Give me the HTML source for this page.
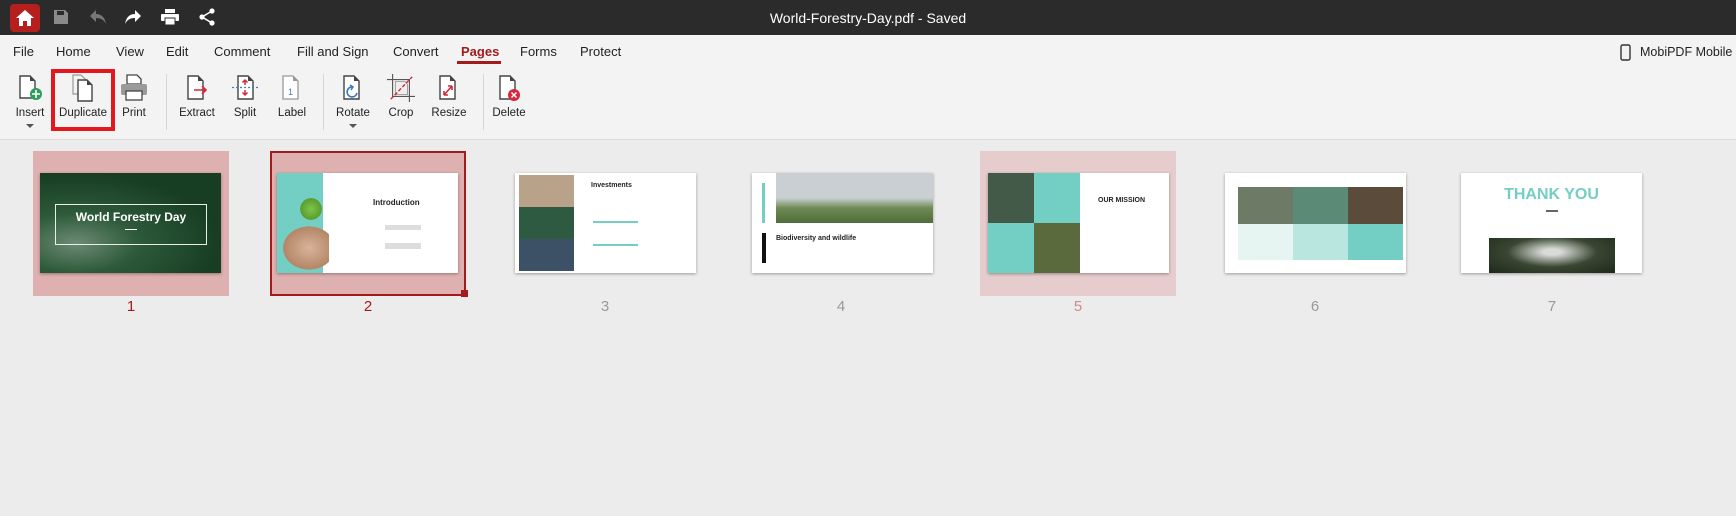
<!DOCTYPE html>
<html><head><meta charset="utf-8"><style>
*{margin:0;padding:0;box-sizing:border-box}
body{width:1736px;height:516px;background:#ececec;font-family:"Liberation Sans",sans-serif;position:relative;overflow:hidden;color:#222}
.a{position:absolute}
#tb{left:0;top:0;width:1736px;height:35px;background:#2b2b2b}
#menu{left:0;top:35px;width:1736px;height:33px;background:#f3f3f3}
#rib{left:0;top:68px;width:1736px;height:72px;background:#f3f3f3;border-bottom:1px solid #dcdcdc}
.m{position:absolute;top:44px;font-size:13px;color:#222;white-space:nowrap}
.btn{position:absolute;top:74px;width:60px;text-align:center;font-size:11.5px;color:#222;white-space:nowrap}
.btn svg{display:block;margin:0 auto 5px auto}
.sep{position:absolute;top:74px;width:1px;height:56px;background:#d6d6d6}
.slide{position:absolute;top:173px;width:181px;height:100px;background:#fff;box-shadow:0 1px 3px rgba(0,0,0,.35);overflow:hidden}
.num{position:absolute;top:298px;width:40px;text-align:center;font-size:15px;color:#999}
.ln{position:absolute;height:2px;background:#ccc}
</style></head><body>
<div class="a" id="tb"></div>
<div class="a" style="left:10px;top:4px;width:30px;height:28px;background:#b5201e;border-radius:4px"></div>
<svg class="a" style="left:15px;top:8px" width="20" height="20" viewBox="0 0 20 20"><path d="M10 2 L19 10 H16 V18 H12 V13 H8 V18 H4 V10 H1Z" fill="#fff"/></svg>
<svg class="a" style="left:53px;top:9px" width="16" height="16"><path d="M1 1H12L15 4V15H1Z" fill="#8a8a8a"/><rect x="4" y="2" width="7" height="4" fill="#2b2b2b"/></svg>
<svg class="a" style="left:89px;top:9px" width="18" height="16"><path d="M7 1L1 7L7 13V9C12 9 15 11 17 15C16 9 13 5 7 5Z" fill="#777"/></svg>
<svg class="a" style="left:124px;top:9px" width="18" height="16"><path d="M11 1L17 7L11 13V9C6 9 3 11 1 15C2 9 5 5 11 5Z" fill="#fff"/></svg>
<svg class="a" style="left:161px;top:9px" width="18" height="16"><rect x="4" y="0" width="10" height="4" fill="#fff"/><rect x="0" y="5" width="18" height="7" rx="1" fill="#fff"/><rect x="4" y="9" width="10" height="7" fill="#fff" stroke="#2b2b2b"/></svg>
<svg class="a" style="left:198px;top:8px" width="18" height="18"><circle cx="14" cy="3" r="2.6" fill="#fff"/><circle cx="4" cy="9" r="2.6" fill="#fff"/><circle cx="14" cy="15" r="2.6" fill="#fff"/><path d="M14 3L4 9L14 15" stroke="#fff" stroke-width="1.6" fill="none"/></svg>
<div class="a" style="left:0;top:10px;width:1736px;text-align:center;color:#fff;font-size:14px">World-Forestry-Day.pdf - Saved</div>

<div class="a" id="menu"></div>
<div class="m" style="left:13px">File</div>
<div class="m" style="left:56px">Home</div>
<div class="m" style="left:116px">View</div>
<div class="m" style="left:166px">Edit</div>
<div class="m" style="left:214px">Comment</div>
<div class="m" style="left:297px">Fill and Sign</div>
<div class="m" style="left:393px">Convert</div>
<div class="m" style="left:461px;color:#a31b1b;font-weight:bold">Pages</div>
<div class="a" style="left:457px;top:61px;width:44px;height:3px;background:#a31b1b"></div>
<div class="m" style="left:520px">Forms</div>
<div class="m" style="left:580px">Protect</div>
<svg class="a" style="left:1620px;top:44px" width="11" height="17"><rect x="1" y="1" width="9" height="15" rx="1.5" fill="none" stroke="#333" stroke-width="1.4"/></svg>
<div class="m" style="left:1640px;top:45px;font-size:12.5px">MobiPDF Mobile</div>

<div class="a" id="rib"></div>
<div class="btn" style="left:0">
<svg width="26" height="28"><path d="M3 2H13L18 7V24H3Z" fill="#fff" stroke="#444" stroke-width="1.4"/><path d="M13 2V7H18" fill="#444"/><circle cx="19" cy="20" r="6" fill="#2e9e5b"/><path d="M19 16V24M15 20H23" stroke="#fff" stroke-width="1.6"/></svg>Insert<div style="margin:5px auto 0;width:0;height:0;border-left:4px solid transparent;border-right:4px solid transparent;border-top:4px solid #555"></div></div>
<div class="btn" style="left:53px">
<svg width="26" height="28"><path d="M3 1H11L15 5V20H3Z" fill="#f3f3f3" stroke="#999" stroke-width="1.2"/><path d="M8 6H17L22 11V27H8Z" fill="#fff" stroke="#444" stroke-width="1.4"/><path d="M17 6V11H22" fill="#444"/></svg>Duplicate</div>
<div class="a" style="left:51px;top:69px;width:64px;height:62px;border:4px solid #e3171c"></div>
<div class="btn" style="left:104px">
<svg width="30" height="28"><path d="M8 1H18L22 5V10H8Z" fill="#fff" stroke="#444" stroke-width="1.3"/><rect x="2" y="10" width="26" height="11" rx="2" fill="#9a9a9a"/><rect x="7" y="17" width="16" height="9" fill="#fff" stroke="#444" stroke-width="1.3"/></svg>Print</div>
<div class="sep" style="left:166px"></div>
<div class="btn" style="left:167px">
<svg width="26" height="28"><path d="M4 2H14L19 7V25H4Z" fill="#fff" stroke="#444" stroke-width="1.4"/><path d="M14 2V7H19" fill="#444"/><path d="M10 16H22M18 12L22 16L18 20" stroke="#d7263d" stroke-width="1.6" fill="none"/></svg>Extract</div>
<div class="btn" style="left:215px">
<svg width="30" height="28"><path d="M8 2H18L23 7V25H8Z" fill="#fff" stroke="#444" stroke-width="1.4"/><path d="M18 2V7H23" fill="#444"/><path d="M2 13.5H28" stroke="#4a7bb5" stroke-width="1.2" stroke-dasharray="2 2"/><path d="M15 6V11M12.5 8.5L15 6L17.5 8.5M15 16V21M12.5 18.5L15 21L17.5 18.5" stroke="#d7263d" stroke-width="1.5" fill="none"/></svg>Split</div>
<div class="btn" style="left:262px">
<svg width="26" height="28"><path d="M4 2H14L19 7V25H4Z" fill="#fff" stroke="#999" stroke-width="1.3"/><path d="M14 2V7H19" fill="#999"/><text x="9" y="21" font-size="9" fill="#4a7bb5" font-family="Liberation Sans">1</text></svg>Label</div>
<div class="sep" style="left:323px"></div>
<div class="btn" style="left:323px">
<svg width="26" height="28"><path d="M4 2H14L19 7V25H4Z" fill="#fff" stroke="#444" stroke-width="1.4"/><path d="M14 2V7H19" fill="#444"/><path d="M17 19A5 5 0 1 1 13 13" stroke="#2f79c0" stroke-width="1.6" fill="none"/><path d="M10 11L13 13L11 16" stroke="#2f79c0" stroke-width="1.5" fill="none"/></svg>Rotate<div style="margin:5px auto 0;width:0;height:0;border-left:4px solid transparent;border-right:4px solid transparent;border-top:4px solid #555"></div></div>
<div class="btn" style="left:371px">
<svg width="30" height="28" viewBox="0 0 30 30"><path d="M6 0V24H30M0 6H24V30" stroke="#555" stroke-width="1.2" fill="none"/><path d="M9 8H19L22 11V22H9Z" fill="#eee" stroke="#999"/><path d="M4 27L27 3" stroke="#d7263d" stroke-width="1.5" stroke-dasharray="4 2"/></svg>Crop</div>
<div class="btn" style="left:419px">
<svg width="26" height="28"><path d="M4 2H14L19 7V25H4Z" fill="#fff" stroke="#444" stroke-width="1.4"/><path d="M14 2V7H19" fill="#444"/><path d="M8 21L16 12M8 21V17M8 21H12M16 12H12M16 12V16" stroke="#d7263d" stroke-width="1.6" fill="none"/></svg>Resize</div>
<div class="sep" style="left:483px"></div>
<div class="btn" style="left:479px">
<svg width="26" height="28"><path d="M4 2H14L19 7V25H4Z" fill="#fff" stroke="#444" stroke-width="1.4"/><path d="M14 2V7H19" fill="#444"/><circle cx="18" cy="21" r="6" fill="#d7263d"/><path d="M15.5 18.5L20.5 23.5M20.5 18.5L15.5 23.5" stroke="#fff" stroke-width="1.5"/></svg>Delete</div>

<!-- pages -->
<div class="a" style="left:33px;top:151px;width:196px;height:145px;background:#dfb0b0"></div>
<div class="a" style="left:270px;top:151px;width:196px;height:145px;background:#dfb0b0;border:2px solid #a31b1b"></div>
<div class="a" style="left:461px;top:290px;width:7px;height:7px;background:#a31b1b"></div>
<div class="a" style="left:980px;top:151px;width:196px;height:145px;background:#e6cccc"></div>

<div class="slide" style="left:40px;background:radial-gradient(ellipse at 20% 70%,#6d8a74 0%,#2d5a3a 30%,#173d23 70%)">
<div class="a" style="left:15px;top:31px;width:152px;height:41px;border:1px solid #e8efe8"></div>
<div class="a" style="left:15px;top:37px;width:152px;text-align:center;color:#fff;font-weight:bold;font-size:12px">World Forestry Day</div>
<div class="a" style="left:85px;top:56px;width:12px;height:1px;background:#fff"></div></div>

<div class="slide" style="left:277px"><div class="a" style="left:0;top:0;width:46px;height:100px;background:#73cfc4"></div>
<div class="a" style="left:2px;top:50px;width:50px;height:50px;background:radial-gradient(ellipse at 60% 50%,#d8b49a,#b48666 60%,transparent 62%)"></div>
<div class="a" style="left:20px;top:25px;width:28px;height:22px;background:radial-gradient(circle,#7cc44a,#5a9e2e 60%,transparent 62%)"></div>
<div class="a" style="left:96px;top:25px;font-size:8px;font-weight:bold">Introduction</div>
<div class="ln" style="left:108px;top:52px;width:36px;height:5px;background:#ddd"></div>
<div class="ln" style="left:108px;top:70px;width:36px;height:6px;background:#ddd"></div></div>

<div class="slide" style="left:515px"><div class="a" style="left:4px;top:2px;width:55px;height:32px;background:#b8a38a"></div>
<div class="a" style="left:4px;top:34px;width:55px;height:32px;background:#2f5a42"></div>
<div class="a" style="left:4px;top:66px;width:55px;height:32px;background:#3c5166"></div>
<div class="a" style="left:76px;top:9px;font-size:7px;font-weight:bold">Investments</div>
<div class="ln" style="left:78px;top:48px;width:45px;background:#73cfc4"></div>
<div class="ln" style="left:78px;top:71px;width:45px;background:#73cfc4"></div></div>

<div class="slide" style="left:752px"><div class="a" style="left:24px;top:0;width:157px;height:50px;background:linear-gradient(#c9cfd2 50%,#6f8a54 70%,#4f6d3a)"></div>
<div class="a" style="left:24px;top:62px;font-size:7px;font-weight:bold">Biodiversity and wildlife</div>
<div class="a" style="left:10px;top:10px;width:3px;height:40px;background:#73cfc4"></div>
<div class="a" style="left:10px;top:60px;width:4px;height:30px;background:#111"></div></div>

<div class="slide" style="left:988px"><div class="a" style="left:0;top:0;width:46px;height:50px;background:#445a48"></div>
<div class="a" style="left:46px;top:0;width:46px;height:50px;background:#73cfc4"></div>
<div class="a" style="left:0;top:50px;width:46px;height:50px;background:#73cfc4"></div>
<div class="a" style="left:46px;top:50px;width:46px;height:50px;background:#5b6a3c"></div>
<div class="a" style="left:110px;top:24px;font-size:7px;font-weight:bold">OUR MISSION</div></div>

<div class="slide" style="left:1225px"><div class="a" style="left:13px;top:14px;width:55px;height:37px;background:#6d7a66"></div>
<div class="a" style="left:68px;top:14px;width:55px;height:37px;background:#5b8a77"></div>
<div class="a" style="left:123px;top:14px;width:55px;height:37px;background:#5a4b3a"></div>
<div class="a" style="left:13px;top:51px;width:55px;height:36px;background:#e6f5f2"></div>
<div class="a" style="left:68px;top:51px;width:55px;height:36px;background:#b9e6df"></div>
<div class="a" style="left:123px;top:51px;width:55px;height:36px;background:#73cfc4"></div></div>

<div class="slide" style="left:1461px"><div class="a" style="left:0;top:13px;width:181px;text-align:center;color:#73cfc4;font-weight:bold;font-size:16px">THANK YOU</div>
<div class="a" style="left:85px;top:37px;width:12px;height:2px;background:#666"></div>
<div class="a" style="left:28px;top:65px;width:126px;height:35px;background:radial-gradient(ellipse at 50% 40%,#d8dcd8 10%,#3a4632 50%,#1d2a1a)"></div></div>

<div class="num" style="left:111px;color:#a31b1b">1</div>
<div class="num" style="left:348px;color:#a31b1b">2</div>
<div class="num" style="left:585px">3</div>
<div class="num" style="left:821px">4</div>
<div class="num" style="left:1058px;color:#d08a8a">5</div>
<div class="num" style="left:1295px">6</div>
<div class="num" style="left:1532px">7</div>
</body></html>
